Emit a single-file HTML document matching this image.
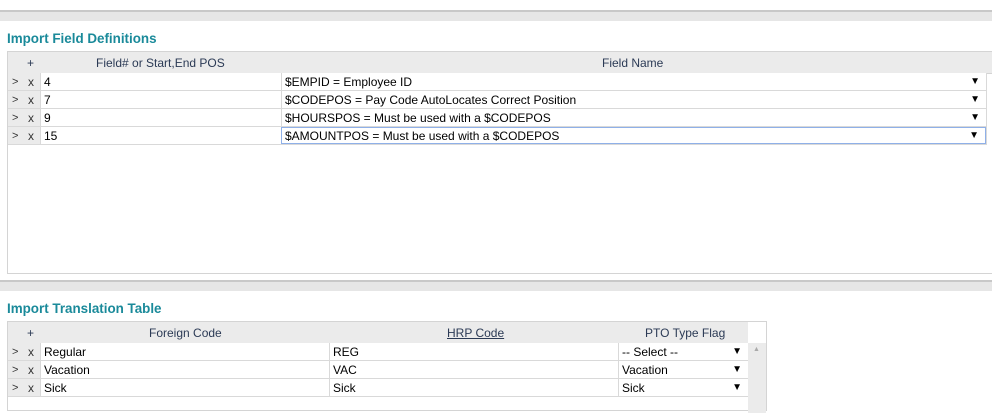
<!DOCTYPE html>
<html><head><style>
body{margin:0;width:992px;height:402px;overflow:hidden;background:#fff;font-family:"Liberation Sans",Tahoma,sans-serif;font-size:12px;color:#000;position:relative}
.abs{position:absolute}
.band{position:absolute;left:0;width:992px;height:9px;background:#e6e6e6;border-top:2px solid #c8c8c8}
.title{position:absolute;left:7px;font-weight:bold;font-size:13.4px;color:#1a8a9a}
.tbl{position:absolute;border:1px solid #d4d4d4;background:#fff;box-sizing:border-box}
.hdr{position:absolute;left:0;top:0;height:21px;background:#ebebeb;border-bottom:1px solid #d4d4d4;color:#2b3a55;line-height:22px}
.row{position:absolute;left:0;height:18px;background:#ebebeb;border-bottom:1px solid #d9d9d9;box-sizing:border-box}
.c{position:absolute;top:0;height:17px;line-height:18px;background:#fff;border-left:1px solid #d9d9d9;padding-left:3px;box-sizing:border-box}
.gt{position:absolute;left:4px;top:0;line-height:18px;color:#333;font-size:11px}
.x{position:absolute;left:20px;top:0;line-height:18px;color:#333}
.arr{position:absolute;right:6px;top:0;font-size:10px;line-height:17px}
</style></head><body>
<div class="band" style="top:10px"></div>
<div class="title" style="top:31px">Import Field Definitions</div>
<div class="tbl" style="left:7px;top:51px;width:986px;height:223px">
 <div class="hdr" style="width:985px">
  <span class="abs" style="left:19px">+</span>
  <span class="abs" style="left:88px">Field# or Start,End POS</span>
  <span class="abs" style="left:594px">Field Name</span>
 </div>
 <div class="abs" style="left:978px;top:21px;width:8px;height:72px;border-left:1px solid #d9d9d9"></div>
 <div class="row" style="top:21px;width:978px"><span class="gt">&gt;</span><span class="x">x</span><div class="c" style="left:32px;width:241px">4</div><div class="c" style="left:273px;width:705px">$EMPID = Employee ID<span class="arr">▼</span></div></div>
 <div class="row" style="top:39px;width:978px"><span class="gt">&gt;</span><span class="x">x</span><div class="c" style="left:32px;width:241px">7</div><div class="c" style="left:273px;width:705px">$CODEPOS = Pay Code AutoLocates Correct Position<span class="arr">▼</span></div></div>
 <div class="row" style="top:57px;width:978px"><span class="gt">&gt;</span><span class="x">x</span><div class="c" style="left:32px;width:241px">9</div><div class="c" style="left:273px;width:705px">$HOURSPOS = Must be used with a $CODEPOS<span class="arr">▼</span></div></div>
 <div class="row" style="top:75px;width:978px"><span class="gt">&gt;</span><span class="x">x</span><div class="c" style="left:32px;width:241px">15</div><div class="c" style="left:273px;width:705px;border:1px solid #8fb0e8;line-height:16px">$AMOUNTPOS = Must be used with a $CODEPOS<span class="arr" style="line-height:15px">▼</span></div></div>
</div>
<div class="band" style="top:280px"></div>
<div class="title" style="top:301px">Import Translation Table</div>
<div class="tbl" style="left:7px;top:321px;width:760px;height:90px">
 <div class="hdr" style="width:740px">
  <span class="abs" style="left:141px">Foreign Code</span>
  <span class="abs" style="left:19px">+</span>
  <span class="abs" style="left:439px;text-decoration:underline">HRP Code</span>
  <span class="abs" style="left:637px">PTO Type Flag</span>
 </div>
 <div class="abs" style="left:740px;top:21px;width:18px;height:70px;background:#ebebeb"><span class="abs" style="left:5px;top:3px;font-size:7px;color:#aaa">▲</span></div>
 <div class="row" style="top:21px;width:740px"><span class="gt">&gt;</span><span class="x">x</span><div class="c" style="left:32px;width:289px">Regular</div><div class="c" style="left:321px;width:289px">REG</div><div class="c" style="left:610px;width:130px">-- Select --<span class="arr">▼</span></div></div>
 <div class="row" style="top:39px;width:740px"><span class="gt">&gt;</span><span class="x">x</span><div class="c" style="left:32px;width:289px">Vacation</div><div class="c" style="left:321px;width:289px">VAC</div><div class="c" style="left:610px;width:130px">Vacation<span class="arr">▼</span></div></div>
 <div class="row" style="top:57px;width:740px"><span class="gt">&gt;</span><span class="x">x</span><div class="c" style="left:32px;width:289px">Sick</div><div class="c" style="left:321px;width:289px">Sick</div><div class="c" style="left:610px;width:130px">Sick<span class="arr">▼</span></div></div>
</div>
</body></html>
